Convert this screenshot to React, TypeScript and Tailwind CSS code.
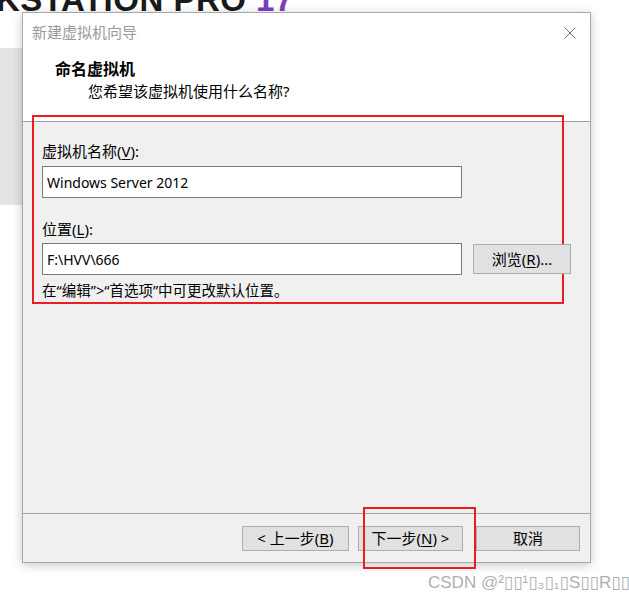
import type React from "react";

const uiFont = { fontFamily: '"Noto Sans", "Noto Sans CJK SC", sans-serif' };

function DialogButton({ children, className = "" }: { children: React.ReactNode; className?: string }) {
  return (
    <button
      type="button"
      className={`flex h-[25px] shrink-0 items-center justify-center border border-[#adadad] bg-[#e1e1e1] text-[15px] leading-none text-black ${className}`}
    >
      {children}
    </button>
  );
}

function TextField({ value }: { value: string }) {
  return (
    <div className="flex h-[32px] w-[420px] shrink-0 items-center border border-[#7a7a7a] bg-white px-[4px] text-[14px] text-black">
      {value}
    </div>
  );
}

export default function App() {
  return (
    <div className="relative h-[599px] w-[629px] overflow-hidden bg-white" style={uiFont}>
      {/* app window behind the dialog */}
      <div className="absolute left-0 top-0 h-[14px] w-[320px] overflow-hidden">
        <div
          className="mt-[-18px] ml-[-4px] whitespace-nowrap text-[33px] font-bold leading-[36px] tracking-[0.5px] text-[#1a1a1a]"
          style={{ fontFamily: '"Liberation Sans", "Noto Sans", sans-serif' }}
        >
          KSTATION PRO <span className="text-[#7b3fc0]">17</span>
        </div>
      </div>
      <div className="absolute left-0 top-[48px] h-[157px] w-[24px] bg-[#e4e4e4]" />

      {/* wizard dialog */}
      <div className="absolute left-[22px] top-[12px] flex h-[551px] w-[569px] flex-col border border-[#a8a8a8] bg-[#f0f0f0] shadow-[0_2px_10px_rgba(0,0,0,0.22)]">
        <div className="flex h-[109px] flex-col border-b border-[#a0a0a0] bg-white">
          <div className="flex h-[38px] items-center justify-between pl-[9px] pr-[14px]">
            <span className="text-[15px] text-[#999999]">新建虚拟机向导</span>
            <svg width="12" height="12" viewBox="0 0 12 12" className="mt-[1px]">
              <path d="M0.5 0.5 L11.5 11.5 M11.5 0.5 L0.5 11.5" stroke="#6f6f6f" strokeWidth="1" fill="none" />
            </svg>
          </div>
          <div className="pl-[32px] pt-[8px] text-[16px] font-bold leading-[20px] text-black">命名虚拟机</div>
          <div className="pl-[65px] pt-[2px] text-[15px] leading-[20px] text-black">您希望该虚拟机使用什么名称?</div>
        </div>

        <div className="relative flex flex-1 flex-col">
          {/* highlighted settings block */}
          <div className="mx-[9px] mt-[-7px] flex h-[189px] w-[532px] flex-col border-2 border-[#ed1c24] pl-[8px] pt-[24px]">
            <div className="text-[15px] leading-[20px] text-black">
              虚拟机名称(<span className="underline underline-offset-2">V</span>):
            </div>
            <div className="mt-[5px]">
              <TextField value="Windows Server 2012" />
            </div>
            <div className="mt-[21px] text-[15px] leading-[20px] text-black">
              位置(<span className="underline underline-offset-2">L</span>):
            </div>
            <div className="mt-[4px] flex items-center gap-[11px]">
              <TextField value="F:\HVV\666" />
              <DialogButton className="h-[30px] w-[98px]">
                浏览(<span className="underline underline-offset-2">R</span>)...
              </DialogButton>
            </div>
            <div className="mt-[5px] text-[14.5px] leading-[20px] text-black">
              在“编辑”&gt;“首选项”中可更改默认位置。
            </div>
          </div>

          <div className="flex-1" />

          <div className="flex h-[49px] items-start justify-end gap-[9px] border-t border-[#a0a0a0] pr-[10px] pt-[12px]">
            <DialogButton className="w-[107px]">
              &lt; 上一步(<span className="underline underline-offset-2">B</span>)
            </DialogButton>
            <DialogButton className="w-[105px]">
              下一步(<span className="underline underline-offset-2">N</span>) &gt;
            </DialogButton>
            <DialogButton className="ml-[4px] w-[104px]">取消</DialogButton>
          </div>
        </div>
      </div>

      {/* highlight around the next button */}
      <div className="absolute left-[363px] top-[507px] h-[62px] w-[113px] border-2 border-[#ed1c24]" />

      {/* watermark */}
      <div
        className="absolute left-[428px] top-[570px] whitespace-nowrap text-[17px] text-[#b0b0b0]"
        style={{ fontFamily: '"Liberation Sans", "DejaVu Sans", sans-serif' }}
      >
        CSDN @²▯▯¹▯₃▯₁▯S▯▯R▯▯
      </div>
    </div>
  );
}
